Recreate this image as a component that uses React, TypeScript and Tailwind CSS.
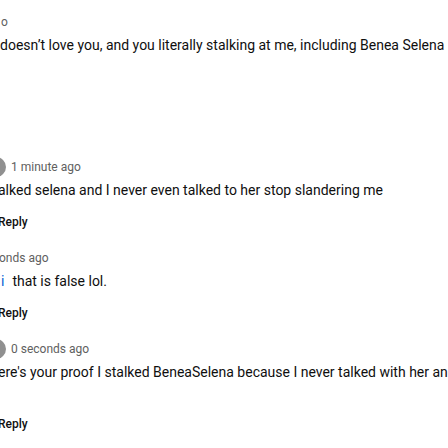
import React from "react";

const font = { fontFamily: "Roboto, 'Noto Sans', Arial, sans-serif" };

function Pill() {
  return <div className="w-5 h-5 rounded-full bg-[#909090] ml-[-14px] mr-[5px] shrink-0" />;
}

function Header({ text, pill, ml = 0 }: { text: string; pill?: boolean; ml?: number }) {
  return (
    <div className="flex items-center h-5 whitespace-nowrap">
      {pill && <Pill />}
      <span className="text-[12px] leading-[18px] text-[#606060]" style={ml ? { marginLeft: ml } : undefined}>
        {text}
      </span>
    </div>
  );
}

function Reply() {
  return (
    <div className="flex items-center h-8 mt-[6px]">
      <span className="text-[12px] leading-[18px] font-medium text-[#0f0f0f] ml-[-2px]">Reply</span>
    </div>
  );
}

export default function App() {
  return (
    <div className="w-[448px] h-[448px] overflow-hidden bg-white" style={font}>
      <div className="flex flex-col whitespace-nowrap">
        {/* Comment 1 */}
        <div className="mt-[12px]">
          <Header text="o" ml={1} />
        </div>
        <div className="mt-[3px] text-[14px] leading-[20px] text-[#0f0f0f]">
          doesn’t love you, and you literally stalking at me, including Benea Selena
        </div>

        {/* Comment 2 */}
        <div className="mt-[102px]">
          <Header text="1 minute ago" pill />
        </div>
        <div className="mt-[3px] text-[14px] leading-[20px] text-[#0f0f0f] ml-[-2px]">
          alked selena and I never even talked to her stop slandering me
        </div>
        <Reply />

        {/* Comment 3 */}
        <div className="mt-[10px]">
          <Header text="onds ago" ml={-1} />
        </div>
        <div className="mt-[3px] text-[14px] leading-[20px] text-[#0f0f0f] whitespace-pre">
          <span className="text-[#065fd4] ml-[1px]">i</span>
          <span className="ml-[8px]">that is false lol.</span>
        </div>
        <Reply />

        {/* Comment 4 */}
        <div className="mt-[10px]">
          <Header text="0 seconds ago" pill />
        </div>
        <div className="mt-[3px] text-[14px] leading-[20px] text-[#0f0f0f] ml-[-2px]">
          ere's your proof I stalked BeneaSelena because I never talked with her and
        </div>
        <div className="h-5" />
        <Reply />
      </div>
    </div>
  );
}
